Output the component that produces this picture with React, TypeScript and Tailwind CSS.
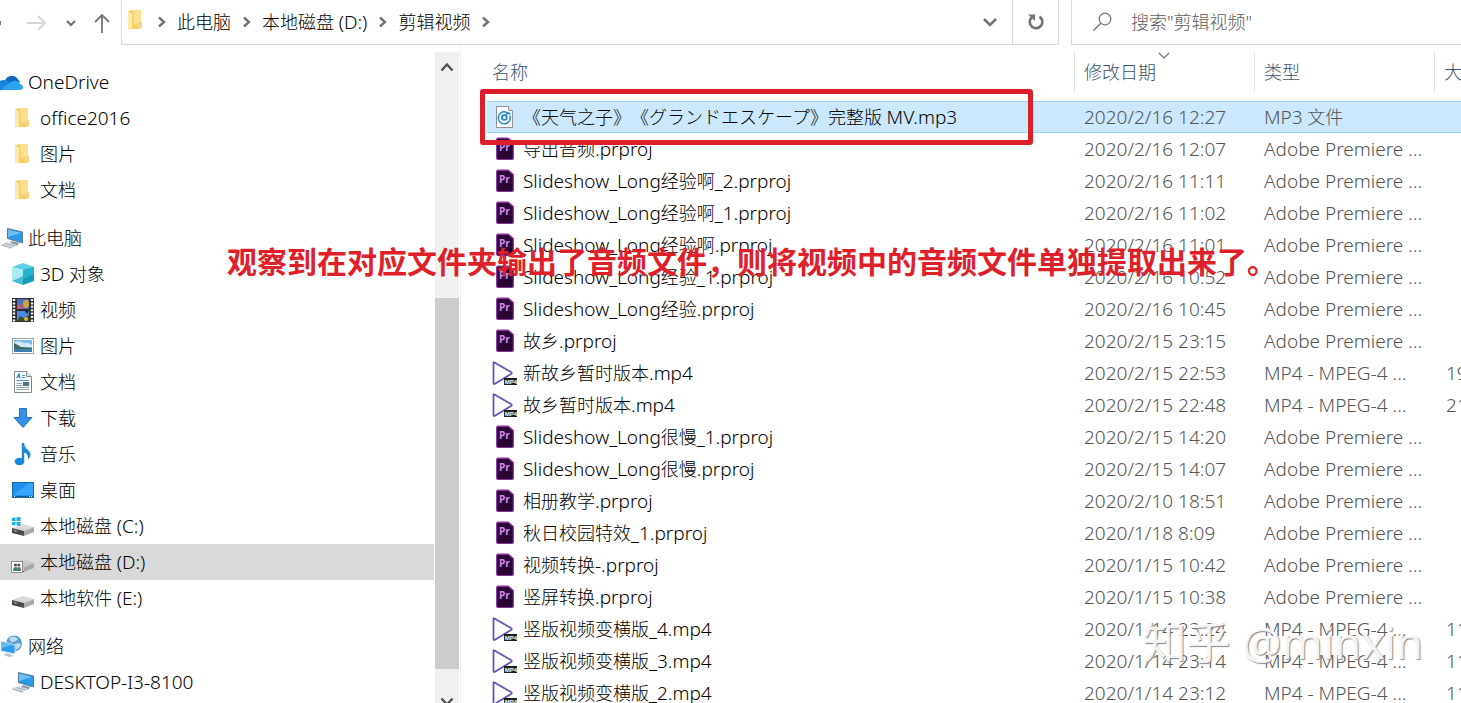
import type { ReactNode } from "react";

type FileKind = "mp3" | "pr" | "mp4";

const LATIN = /([\x21-\x7e]+(?: [\x21-\x7e]+)*)/;

// Latin runs are set one step larger than the Chinese text around them
function Mixed({ children }: { children: string }) {
  return (
    <>
      {children.split(LATIN).map((part, i) =>
        i % 2 === 1 ? (
          <span key={i} className="text-[19px]">{part}</span>
        ) : (
          part
        )
      )}
    </>
  );
}

function FolderIcon() {
  return (
    <svg width="22" height="22" viewBox="0 0 22 22" className="shrink-0">
      <path d="M4 2 L9 1 H17 V18 L16 20 H4 Z" fill="#f3cf6c" />
      <path d="M9 1 H17 V13 L10 16 Z" fill="#ffe08a" />
      <path d="M4 2 L8 5 V21 L4 19 Z" fill="#ffe9a8" />
      <path d="M14 13 H18 V19 H14 Z" fill="#f5d584" />
    </svg>
  );
}

function CloudIcon() {
  return (
    <svg width="24" height="22" viewBox="0 0 24 22" className="shrink-0">
      <path d="M5 10 A7 7 0 0 1 17 7 L20 11 L9 14 L1 18 Q-4 13 1 11 Z" fill="#0f6cbd" />
      <path d="M-3 16 Q-2 9 4 9 Q8 9 11 12 L4 19 H0 Z" fill="#1683d8" />
      <path d="M4 19 Q1 18 3 16 L10 12 Q13 9 17 10 Q20 11 20 13 Q23 14 23 16 Q23 19 20 19 Z" fill="#2ba3ee" />
    </svg>
  );
}

function ComputerIcon() {
  return (
    <svg width="24" height="24" viewBox="0 0 24 24" className="shrink-0">
      <path d="M7.5 2.5 L22.5 6 V17 L7.5 12.5 Z" fill="#2b9be8" stroke="#5b7b93" strokeWidth="1" />
      <path d="M8 3.5 L21 7 L8 11 Z" fill="#6cc0f5" />
      <path d="M12 15 L19 17 L17 20 L10 17 Z" fill="#8c9aa5" />
      <path d="M0 19 L7 16 L17 19 L10 23 Z" fill="#d5dce1" />
      <path d="M2 19 L12 22 M5 17.5 L15 20" stroke="#8f9ba4" strokeWidth="0.7" />
    </svg>
  );
}

function CubeIcon() {
  return (
    <svg width="24" height="24" viewBox="0 0 24 24" className="shrink-0">
      <path d="M1 5 L12 1 L23 5 L12 8 Z" fill="#5ed0e6" />
      <path d="M1 5 L12 8 V23 L1 19 Z" fill="#a9ebf2" />
      <path d="M1 19 L12 14 V23 Z" fill="#49bcd3" />
      <path d="M12 8 L23 5 V19 L12 23 Z" fill="#159cba" />
      <path d="M12 8 L23 5 V12 L12 17 Z" fill="#27b2cd" />
    </svg>
  );
}

function FilmIcon() {
  return (
    <svg width="24" height="24" viewBox="0 0 24 24" className="shrink-0">
      <rect x="1" y="0" width="22" height="24" fill="#2d2d2d" />
      <path d="M3 1 V24 M21 1 V24" stroke="#f3f3f3" strokeWidth="2.4" strokeDasharray="2 1.4" />
      <rect x="6" y="1" width="12" height="10" fill="#4b6fc5" />
      <rect x="6" y="13" width="12" height="10" fill="#4a8ae0" />
      <path d="M6 11 V7 L10 6 L13 11 Z" fill="#c05a78" />
      <ellipse cx="15" cy="6" rx="3" ry="4" fill="#d3a72e" />
      <path d="M6 23 L9 18 L13 20 L18 17 V23 Z" fill="#33502f" />
      <circle cx="15" cy="21" r="2" fill="#e2b63a" />
      <path d="M13 12 L16 16 L18 12 Z" fill="#2b2420" />
    </svg>
  );
}

function PictureIcon() {
  return (
    <svg width="24" height="24" viewBox="0 0 24 24" className="shrink-0">
      <rect x="1.5" y="4.5" width="21" height="15" fill="#fff" stroke="#9aa2a8" />
      <rect x="3" y="6" width="18" height="12" fill="#7db8ea" />
      <path d="M3 8 Q8 6 13 9 Q17 8 21 11 V13 H3 Z" fill="#d4e9f7" />
      <path d="M3 9 Q7 11 10 13 L21 14 V16 H3 Z" fill="#3f6b5a" />
      <rect x="3" y="15" width="18" height="3" fill="#3c80b4" />
    </svg>
  );
}

function DocumentIcon() {
  return (
    <svg width="24" height="24" viewBox="0 0 24 24" className="shrink-0">
      <path d="M3.5 1.5 H15.5 L20.5 6.5 V22.5 H3.5 Z" fill="#fff" stroke="#7e8a92" />
      <path d="M15.5 1.5 V6.5 H20.5" fill="#e6ebee" stroke="#7e8a92" />
      <path d="M5.5 8 L8 4 L9 8 M6.5 7 H9" stroke="#2c83bd" strokeWidth="1.2" fill="none" />
      <path d="M11 5.5 H14 M11 7.5 H14 M5.5 10.5 H18" stroke="#4c9bcc" />
      <path d="M5.5 13.5 H11 M5.5 15.5 H11 M5.5 17.5 H18 M5.5 19.5 H18" stroke="#97a1a8" />
      <rect x="12" y="12" width="6" height="4" fill="#4a7595" />
    </svg>
  );
}

function DownloadIcon() {
  return (
    <svg width="24" height="24" viewBox="0 0 24 24" className="shrink-0">
      <path d="M8.5 2.5 H15.5 V11.5 H21 L12 21.5 L3 11.5 H8.5 Z" fill="#3490e8" stroke="#2674c0" />
    </svg>
  );
}

function MusicIcon() {
  return (
    <svg width="24" height="24" viewBox="0 0 24 24" className="shrink-0">
      <ellipse cx="8.5" cy="19.5" rx="4.8" ry="3.8" fill="#1588dc" />
      <path d="M10.8 1 H13.2 Q13 5 17 8 Q22 12 17 18 Q18 12 13.2 10.5 V19 H10.8 Z" fill="#1588dc" />
    </svg>
  );
}

function DesktopIcon() {
  return (
    <svg width="24" height="24" viewBox="0 0 24 24" className="shrink-0">
      <rect x="1.5" y="4.5" width="21" height="15" fill="#1e90f0" stroke="#1769aa" />
      <path d="M2 17 L18 5 H22 V17 Z" fill="#38a4fa" />
      <path d="M2 18.5 H22" stroke="#0d5796" />
      <path d="M3 18.5 H5 M18 18.5 H21" stroke="#fff" strokeDasharray="1 1" />
    </svg>
  );
}

function DriveIcon({ badge }: { badge?: "windows" | "users" }) {
  return (
    <svg width="24" height="24" viewBox="0 0 24 24" className="shrink-0">
      <path d="M1 14 L12 10 L23 13 L13 17 Z" fill="#d9d9d9" />
      <path d="M1 14 L13 17 V22 L1 19 Z" fill="#4b4b4b" />
      <path d="M13 17 L23 13 V18 L13 22 Z" fill="#a9a9a9" />
      <path d="M3 16.5 L6 17.3" stroke="#9fd69f" />
      {badge === "windows" && (
        <path d="M1 4 L4.5 3.5 V7 H1 Z M5.5 3.3 L9.5 3 V7 H5.5 Z M1 8 H4.5 V11.5 L1 11 Z M5.5 8 H9.5 V12 L5.5 11.6 Z" fill="#19b0e0" />
      )}
      {badge === "users" && (
        <>
          <path d="M1 14 L12 10 L23 13 L13 17 V21 L1 18 Z" fill="#c9c9c9" />
          <rect x="0.5" y="11.5" width="11" height="11" fill="#fff" stroke="#8d8d8d" />
          <circle cx="4.5" cy="15" r="1.6" fill="#4a4a4a" />
          <circle cx="7.8" cy="15" r="1.6" fill="#5a5a5a" />
          <path d="M2 21 Q2 17 5 17 Q7 17 7 21 Z" fill="#3f7f5f" />
          <path d="M6 21 Q6 17 8 17 Q10 17 10 21 Z" fill="#56707f" />
        </>
      )}
    </svg>
  );
}

function NetworkIcon() {
  return (
    <svg width="24" height="24" viewBox="0 0 24 24" className="shrink-0">
      <circle cx="14" cy="9.5" r="8" fill="#5b9fce" />
      <path d="M9 4 Q14 1 18 5 Q15 9 11 8 Z M15 10 Q20 8 21 11 Q19 15 16 16 Z" fill="#bcdcf0" />
      <path d="M1 7 L15 11 V20 L1 17 Z" fill="#2b9be8" stroke="#e7f3fb" strokeWidth="0.8" />
      <path d="M2 8 L13 11 L2 14 Z" fill="#62bbf3" />
      <path d="M6 19 L10 20 L14 22 L9 23 L4 21 Z" fill="#b8c3ca" />
    </svg>
  );
}

function FileIcon({ kind }: { kind: FileKind }) {
  if (kind === "mp3") {
    return (
      <svg width="28" height="24" viewBox="0 0 28 24" className="shrink-0" aria-hidden="true">
        <path d="M5.5 1.5 H17.5 L21.5 5.5 V22.5 H5.5 Z" fill="#fdfdfd" stroke="#8f9499" />
        <path d="M17.5 1.5 V5.5 H21.5" fill="#e8e8e8" stroke="#8f9499" />
        <path d="M15 7 A6 6 0 1 0 19 11" fill="none" stroke="#2588c9" strokeWidth="1.5" />
        <circle cx="13.3" cy="12.5" r="2.4" fill="none" stroke="#2588c9" strokeWidth="1.8" />
        <path d="M15.5 7 V12" stroke="#2588c9" strokeWidth="1.2" />
        <path d="M15 6.5 L19.5 8 V10 L15 8.5 Z" fill="#2588c9" />
      </svg>
    );
  }
  if (kind === "pr") {
    return (
      <svg width="28" height="24" viewBox="0 0 28 24" className="shrink-0" aria-hidden="true">
        <path d="M7 1.2 H17 L22.3 5.5 V21 Q22.3 22.5 21 22.5 H7 Q5.7 22.5 5.7 21 V2.6 Q5.7 1.2 7 1.2 Z" fill="#2a0634" stroke="#8a2da5" strokeWidth="1.2" />
        <text x="8" y="13.5" fontSize="10" fontWeight="700" fill="#d68bf5" fontFamily="Open Sans, sans-serif">Pr</text>
      </svg>
    );
  }
  return (
    <svg width="28" height="24" viewBox="0 0 28 24" className="shrink-0" aria-hidden="true">
      <path d="M2.5 2 Q2.5 1 3.5 1.5 L20 11 Q21.5 12 20 13 L4 22.7 Q2.5 23.5 2.5 22 Z" fill="#fff" stroke="#6354b8" strokeWidth="1.8" />
      <rect x="13" y="17" width="13" height="7" fill="#1f1f1f" />
      <text x="13.8" y="22.8" fontSize="6" fontWeight="700" fill="#fff" fontFamily="Liberation Sans, sans-serif">MP4</text>
    </svg>
  );
}

function Chevron({ className }: { className?: string }) {
  return (
    <svg width="10" height="12" viewBox="0 0 10 12" className={className} aria-hidden="true">
      <path d="M2 1.5 L7 6 L2 10.5" fill="none" stroke="#737373" strokeWidth="2.4" />
    </svg>
  );
}

type NavItem = { label: string; icon: ReactNode; root?: boolean; selected?: boolean };

const groups: NavItem[][] = [
  [
    { label: "OneDrive", icon: <CloudIcon />, root: true },
    { label: "office2016", icon: <FolderIcon /> },
    { label: "图片", icon: <FolderIcon /> },
    { label: "文档", icon: <FolderIcon /> },
  ],
  [
    { label: "此电脑", icon: <ComputerIcon />, root: true },
    { label: "3D 对象", icon: <CubeIcon /> },
    { label: "视频", icon: <FilmIcon /> },
    { label: "图片", icon: <PictureIcon /> },
    { label: "文档", icon: <DocumentIcon /> },
    { label: "下载", icon: <DownloadIcon /> },
    { label: "音乐", icon: <MusicIcon /> },
    { label: "桌面", icon: <DesktopIcon /> },
    { label: "本地磁盘 (C:)", icon: <DriveIcon badge="windows" /> },
    { label: "本地磁盘 (D:)", icon: <DriveIcon badge="users" />, selected: true },
    { label: "本地软件 (E:)", icon: <DriveIcon /> },
  ],
  [
    { label: "网络", icon: <NetworkIcon />, root: true },
    { label: "DESKTOP-I3-8100", icon: <ComputerIcon /> },
  ],
];

const PR = "Adobe Premiere ...";
const MP4 = "MP4 - MPEG-4 ...";

const files: { name: string; kind: FileKind; date: string; type: string; size?: string }[] = [
  { name: "《天气之子》《グランドエスケープ》完整版 MV.mp3", kind: "mp3", date: "2020/2/16 12:27", type: "MP3 文件" },
  { name: "导出音频.prproj", kind: "pr", date: "2020/2/16 12:07", type: PR },
  { name: "Slideshow_Long经验啊_2.prproj", kind: "pr", date: "2020/2/16 11:11", type: PR },
  { name: "Slideshow_Long经验啊_1.prproj", kind: "pr", date: "2020/2/16 11:02", type: PR },
  { name: "Slideshow_Long经验啊.prproj", kind: "pr", date: "2020/2/16 11:01", type: PR },
  { name: "Slideshow_Long经验_1.prproj", kind: "pr", date: "2020/2/16 10:52", type: PR },
  { name: "Slideshow_Long经验.prproj", kind: "pr", date: "2020/2/16 10:45", type: PR },
  { name: "故乡.prproj", kind: "pr", date: "2020/2/15 23:15", type: PR },
  { name: "新故乡暂时版本.mp4", kind: "mp4", date: "2020/2/15 22:53", type: MP4, size: "19" },
  { name: "故乡暂时版本.mp4", kind: "mp4", date: "2020/2/15 22:48", type: MP4, size: "21" },
  { name: "Slideshow_Long很慢_1.prproj", kind: "pr", date: "2020/2/15 14:20", type: PR },
  { name: "Slideshow_Long很慢.prproj", kind: "pr", date: "2020/2/15 14:07", type: PR },
  { name: "相册教学.prproj", kind: "pr", date: "2020/2/10 18:51", type: PR },
  { name: "秋日校园特效_1.prproj", kind: "pr", date: "2020/1/18 8:09", type: PR },
  { name: "视频转换-.prproj", kind: "pr", date: "2020/1/15 10:42", type: PR },
  { name: "竖屏转换.prproj", kind: "pr", date: "2020/1/15 10:38", type: PR },
  { name: "竖版视频变横版_4.mp4", kind: "mp4", date: "2020/1/14 23:24", type: MP4, size: "11" },
  { name: "竖版视频变横版_3.mp4", kind: "mp4", date: "2020/1/14 23:14", type: MP4, size: "11" },
  { name: "竖版视频变横版_2.mp4", kind: "mp4", date: "2020/1/14 23:12", type: MP4, size: "11" },
];

function TopBar() {
  return (
    <header className="flex h-[45px] shrink-0">
      <div className="flex w-[121px] shrink-0 items-center">
        <span className="h-1 w-px bg-[#777]" />
        <button aria-label="前进" className="ml-[26px]">
          <svg width="20" height="18" viewBox="0 0 20 18">
            <path d="M0 9 H18 M11 2 L18 9 L11 16" fill="none" stroke="#d6d6d6" strokeWidth="2" />
          </svg>
        </button>
        <button aria-label="最近浏览的位置" className="ml-[19px]">
          <svg width="10" height="8" viewBox="0 0 10 8">
            <path d="M1 2 L5 6 L9 2" fill="none" stroke="#6e6e6e" strokeWidth="2" />
          </svg>
        </button>
        <button aria-label="向上" className="ml-[17px]">
          <svg width="18" height="22" viewBox="0 0 18 22">
            <path d="M9 21 V3 M2 10 L9 3 L16 10" fill="none" stroke="#757575" strokeWidth="1.8" />
          </svg>
        </button>
      </div>
      <nav aria-label="地址" className="flex min-w-0 flex-1 items-center border-x border-b border-[#d9d9d9]">
        <span className="ml-[2px] mb-1"><FolderIcon /></span>
        <Chevron className="ml-[11px]" />
        <button className="ml-[10px]">此电脑</button>
        <Chevron className="ml-[11px]" />
        <button className="ml-[10px]"><Mixed>本地磁盘 (D:)</Mixed></button>
        <Chevron className="ml-[11px]" />
        <button className="ml-[10px]">剪辑视频</button>
        <Chevron className="ml-[11px]" />
        <button aria-label="历史地址" className="ml-auto mr-[14px]">
          <svg width="16" height="12" viewBox="0 0 16 12">
            <path d="M2 3 L8 9 L14 3" fill="none" stroke="#737373" strokeWidth="2.6" />
          </svg>
        </button>
        <button aria-label="刷新" className="flex w-[46px] items-center justify-center self-stretch border-l border-[#d9d9d9]">
          <svg width="18" height="18" viewBox="0 0 18 18">
            <path d="M4.5 4.5 A6.3 6.3 0 1 0 12.5 3.6" fill="none" stroke="#737373" strokeWidth="2.6" />
            <path d="M1 1.5 H8 V8 Z" fill="#737373" />
          </svg>
        </button>
      </nav>
      <label className="ml-[12px] flex w-[390px] shrink-0 items-center border-b border-l border-[#d9d9d9] pl-[20px]">
        <svg width="20" height="20" viewBox="0 0 20 20" aria-hidden="true">
          <circle cx="13" cy="7" r="5.8" fill="none" stroke="#777" strokeWidth="1.3" />
          <path d="M9 11 L1.5 18.5" stroke="#777" strokeWidth="1.5" />
        </svg>
        <input
          type="text"
          aria-label="搜索"
          placeholder={'搜索"剪辑视频"'}
          className="ml-[19px] min-w-0 flex-1 bg-transparent outline-none placeholder:text-[#5d5d5d]"
        />
      </label>
    </header>
  );
}

function Sidebar() {
  return (
    <aside className="flex w-[461px] shrink-0 border-r border-[#f0f0f0] pt-[7px]">
      <nav aria-label="导航窗格" className="mr-px flex flex-1 flex-col gap-3 pt-3">
        {groups.map((items, g) => (
          <ul key={g}>
            {items.map((item) => (
              <li key={item.label}>
                <a
                  href="#"
                  className={`flex h-9 items-center ${item.root ? "gap-[4px]" : "gap-[5px] pl-[11px]"} ${
                    item.selected ? "bg-[#d9d9d9]" : ""
                  }`}
                >
                  <span className="flex w-6 shrink-0">{item.icon}</span>
                  <span><Mixed>{item.label}</Mixed></span>
                </a>
              </li>
            ))}
          </ul>
        ))}
      </nav>
      <div className="mr-px flex w-6 flex-col items-center bg-[#f0f0f0]">
        <svg width="14" height="10" viewBox="0 0 14 10" className="mt-[10px] shrink-0" aria-hidden="true">
          <path d="M1.5 8.5 L7 2.5 L12.5 8.5" fill="none" stroke="#505050" strokeWidth="2.4" />
        </svg>
        <div className="mt-[226px] h-[371px] w-full shrink-0 bg-[#cdcdcd]" />
        <svg width="14" height="10" viewBox="0 0 14 10" className="mt-[28px] shrink-0" aria-hidden="true">
          <path d="M1.5 1.5 L7 7.5 L12.5 1.5" fill="none" stroke="#505050" strokeWidth="2.4" />
        </svg>
      </div>
    </aside>
  );
}

function FileTable() {
  return (
    <table className="w-full table-fixed border-collapse text-left">
      <colgroup>
        <col />
        <col className="w-[180px]" />
        <col className="w-[180px]" />
        <col className="w-[27px]" />
      </colgroup>
      <thead className="text-[#3c506a]">
        <tr className="h-[56px] align-top">
          <th className="pl-[5px] pt-[7px] font-light">
            <div className="flex h-10 items-center">名称</div>
          </th>
          <th aria-sort="descending" className="relative pt-[7px] font-light">
            <div className="flex h-10 items-center border-l border-[#e2e2e2] pl-[9px]">修改日期</div>
            <svg width="12" height="8" viewBox="0 0 12 8" className="absolute left-[84px] top-[7px]" aria-hidden="true">
              <path d="M1 1 L6 6 L11 1" fill="none" stroke="#6b6b6b" strokeWidth="1.1" />
            </svg>
          </th>
          <th className="pt-[7px] font-light">
            <div className="flex h-10 items-center border-l border-[#e2e2e2] pl-[9px]">类型</div>
          </th>
          <th className="pt-[7px] font-light">
            <div className="flex h-10 items-center overflow-hidden whitespace-nowrap border-l border-[#e2e2e2] pl-[9px]">大小</div>
          </th>
        </tr>
      </thead>
      <tbody className="text-[#555]">
        {files.map((f, i) => (
          <tr key={f.name} className={`h-8 whitespace-nowrap ${i === 0 ? "bg-[#cce8ff] shadow-[inset_0_1px_#99d1ff,inset_0_-1px_#99d1ff]" : ""}`}>
            <td className="p-0 text-black">
              <div className="flex h-8 items-center gap-[4px] pl-[4px]">
                <FileIcon kind={f.kind} />
                <span><Mixed>{f.name}</Mixed></span>
              </div>
            </td>
            <td className="p-0 pl-[10px]"><Mixed>{f.date}</Mixed></td>
            <td className="p-0 pl-[10px]"><Mixed>{f.type}</Mixed></td>
            <td className="overflow-hidden p-0 pl-[12px]">{f.size && <Mixed>{f.size}</Mixed>}</td>
          </tr>
        ))}
      </tbody>
    </table>
  );
}

export default function App() {
  return (
    <div className="relative flex h-screen flex-col overflow-hidden bg-white font-['Noto_Sans','Noto_Sans_CJK_SC',sans-serif] text-[18px] font-light leading-6 text-black [text-spacing-trim:space-all]">
      <TopBar />
      <div className="flex min-h-0 flex-1">
        <Sidebar />
        <main className="relative min-w-0 flex-1 pl-[26px]">
          <FileTable />
          <div className="absolute left-[19px] right-[428px] top-[44px] h-[56px] rounded-[3px] border-[5px] border-[#dc1f2b]" />
        </main>
      </div>
      <p className="absolute left-[227px] top-[242px] whitespace-nowrap text-[30px] font-bold leading-[40px] text-[#e02029]">
        观察到在对应文件夹输出了音频文件，则将视频中的音频文件单独提取出来了。
      </p>
      <p className="absolute right-[38px] top-[618px] whitespace-nowrap text-[44px] font-normal leading-[48px] text-white/90 [text-shadow:1px_1px_1px_#888]">
        知乎 @minxin
      </p>
    </div>
  );
}
